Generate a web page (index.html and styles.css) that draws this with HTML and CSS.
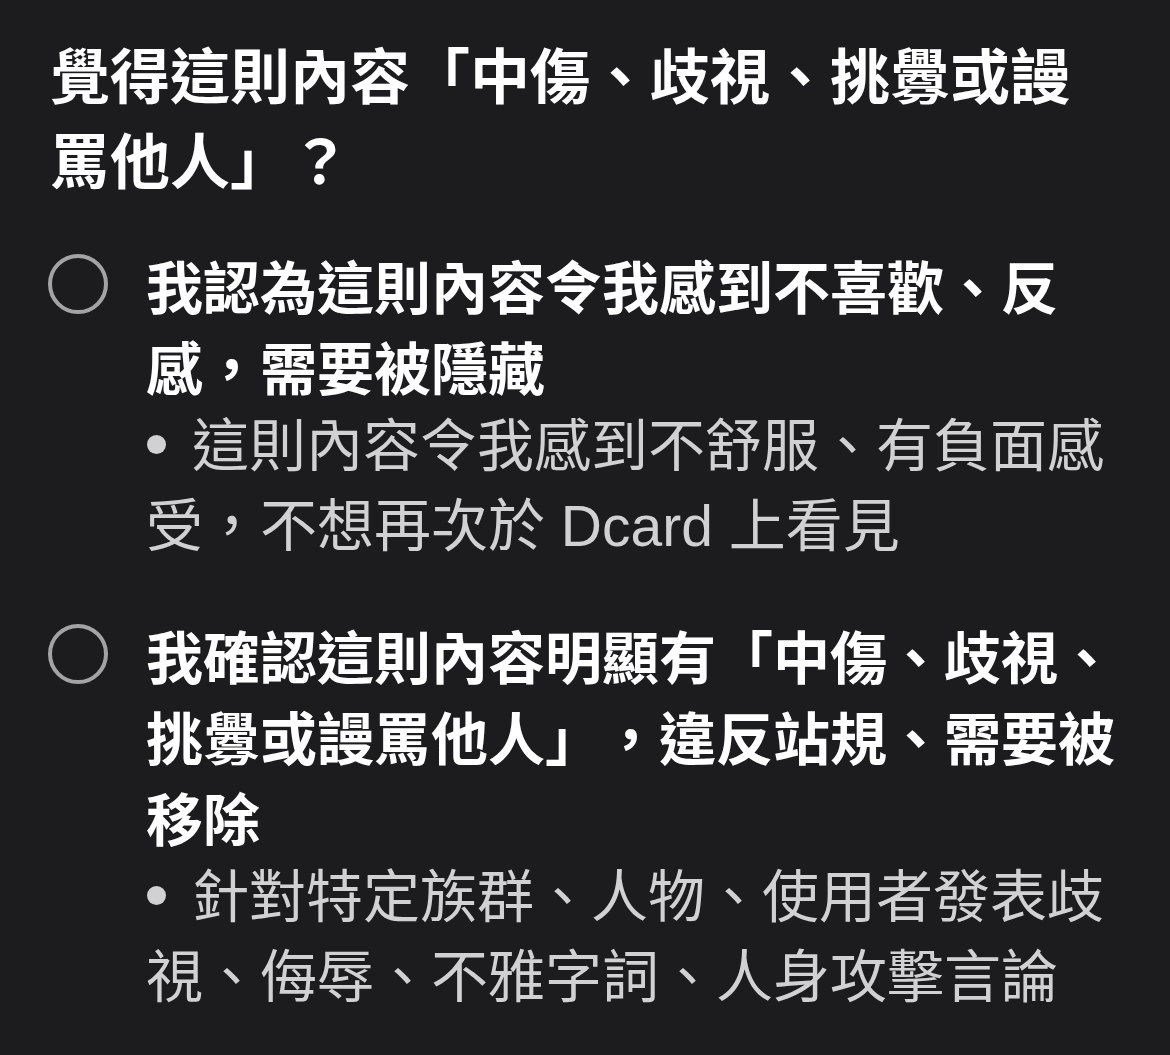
FILE: index.html
```html
<!DOCTYPE html>
<html lang="zh-Hant-TW">
<head>
<meta charset="utf-8">
<link rel="stylesheet" href="styles.css">
</head>
<body>
<main class="sheet">
  <h1 class="title">覺得這則內容「中傷、歧視、挑釁或謾罵他人」？</h1>
  <ul class="options">
    <li class="option">
      <span class="radio"></span>
      <div class="option-body">
        <p class="option-label">我認為這則內容令我感到不喜歡、反感，需要被隱藏</p>
        <p class="option-desc"><span class="bullet"></span>這則內容令我感到不舒服、有負面感受，不想再次於 Dcard 上看見</p>
      </div>
    </li>
    <li class="option">
      <span class="radio"></span>
      <div class="option-body">
        <p class="option-label">我確認這則內容明顯有「中傷、歧視、挑釁或謾罵他人」，違反站規、需要被移除</p>
        <p class="option-desc"><span class="bullet"></span>針對特定族群、人物、使用者發表歧視、侮辱、不雅字詞、人身攻擊言論</p>
      </div>
    </li>
  </ul>
</main>
</body>
</html>
```

FILE: styles.css
```css
html, body {
  margin: 0;
  padding: 0;
  background: #1c1c1e;
}
body {
  font-family: "Noto Sans CJK TC", "Noto Sans", sans-serif;
  color: #ffffff;
  width: 1170px;
  height: 1055px;
  overflow: hidden;
  text-spacing-trim: space-all;
}
.sheet {
  padding: 30px 50px 0 48px;
}
.title {
  margin: 0 0 0 2px;
  font-size: 60px;
  line-height: 85px;
  font-weight: 700;
  color: #ffffff;
}
.options {
  list-style: none;
  margin: 44px 0 0 0;
  padding: 0;
  display: flex;
  flex-direction: column;
  gap: 48px;
}
.option {
  display: flex;
  align-items: flex-start;
  gap: 38px;
}
.radio {
  flex: none;
  box-sizing: border-box;
  width: 60px;
  height: 60px;
  margin-top: 10px;
  border: 4px solid #a3a3a6;
  border-radius: 50%;
}
.option-body {
  flex: 1;
  min-width: 0;
}
.option-label {
  margin: 0;
  font-size: 57px;
  line-height: 81px;
  font-weight: 700;
  color: #ffffff;
}
.option-desc {
  margin: 0;
  font-family: "Liberation Sans", "Noto Sans CJK TC", sans-serif;
  font-size: 57px;
  line-height: 80px;
  font-weight: 400;
  color: #d1d1d3;
}
.bullet {
  display: inline-block;
  width: 19px;
  height: 19px;
  margin: 0 26px 0 1px;
  border-radius: 50%;
  background: #d1d1d3;
  vertical-align: 12px;
}
```
